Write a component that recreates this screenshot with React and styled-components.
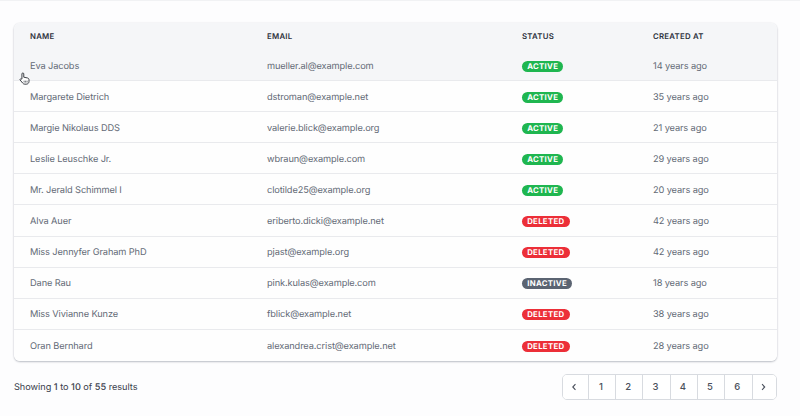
import React from "react";
import styled, { createGlobalStyle } from "styled-components";

const users = [
  ["Eva Jacobs", "mueller.al@example.com", "active", "14 years ago"],
  ["Margarete Dietrich", "dstroman@example.net", "active", "35 years ago"],
  ["Margie Nikolaus DDS", "valerie.blick@example.org", "active", "21 years ago"],
  ["Leslie Leuschke Jr.", "wbraun@example.com", "active", "29 years ago"],
  ["Mr. Jerald Schimmel I", "clotilde25@example.org", "active", "20 years ago"],
  ["Alva Auer", "eriberto.dicki@example.net", "deleted", "42 years ago"],
  ["Miss Jennyfer Graham PhD", "pjast@example.org", "deleted", "42 years ago"],
  ["Dane Rau", "pink.kulas@example.com", "inactive", "18 years ago"],
  ["Miss Vivianne Kunze", "fblick@example.net", "deleted", "38 years ago"],
  ["Oran Bernhard", "alexandrea.crist@example.net", "deleted", "28 years ago"],
];

const statusColors = {
  active: "#1fb650",
  deleted: "#ec2f38",
  inactive: "#5b6472",
};

function App() {
  return (
    <Page>
      <GlobalStyle />
      <Card>
        <HeadRow>
          <HeadCell>Name</HeadCell>
          <HeadCell>Email</HeadCell>
          <HeadCell>Status</HeadCell>
          <HeadCell>Created at</HeadCell>
        </HeadRow>
        {users.map(([name, email, status, created], i) => (
          <Row key={email} $hovered={i === 0}>
            <Cell>{name}</Cell>
            <Cell>{email}</Cell>
            <Cell>
              <Badge $status={status}>{status}</Badge>
            </Cell>
            <Cell>{created}</Cell>
          </Row>
        ))}
        <Cursor viewBox="0 0 12 14" fill="#fff" stroke="#2b2f36" strokeWidth="1">
          <path d="M3.2 7.6V2a1 1 0 0 1 2 0v3.6l4 .8c1 .2 1.7 1 1.7 2v1.8c0 1.6-1.2 3-3 3H6.4c-1 0-1.8-.4-2.4-1.2L1.2 8.6c-.5-.7.6-1.7 1.3-1z" />
          <path d="M5.6 9.4v2M7.2 9.4v2M8.8 9.4v2" strokeWidth="0.7" />
        </Cursor>
      </Card>
      <Footer>
        <Summary>
          Showing <b>1</b> to <b>10</b> of <b>55</b> results
        </Summary>
        <Pagination>
          <PageButton aria-label="Previous" $arrow>
            <Chevron viewBox="0 0 8 10">
              <path d="M5.5 1.5 2.2 5l3.3 3.5" />
            </Chevron>
          </PageButton>
          {[1, 2, 3, 4, 5, 6].map((n) => (
            <PageButton key={n}>{n}</PageButton>
          ))}
          <PageButton aria-label="Next" $arrow>
            <Chevron viewBox="0 0 8 10">
              <path d="M2.5 1.5 5.8 5 2.5 8.5" />
            </Chevron>
          </PageButton>
        </Pagination>
      </Footer>
    </Page>
  );
}

const GlobalStyle = createGlobalStyle`
  html, body {
    margin: 0;
    padding: 0;
    background: #fdfdfe;
    font-family: Inter, "Liberation Sans", sans-serif;
    text-rendering: geometricPrecision;
  }
`;

const Page = styled.div`
  width: 800px;
  height: 416px;
  box-sizing: border-box;
  padding: 23px 23px 0 14px;
  border-top: 1px solid #f1f2f4;
  overflow: hidden;
`;

const Card = styled.div`
  position: relative;
  margin-top: -1px;
  background: #fff;
  border-radius: 6px;
  overflow: hidden;
  box-shadow: 0 1px 2px rgba(30, 40, 60, 0.28), 0 0 2px rgba(30, 40, 60, 0.08);
`;

const columns = "237px 255px 131px 1fr";

const HeadRow = styled.div`
  display: grid;
  grid-template-columns: ${columns};
  height: 27px;
  box-sizing: border-box;
  padding-bottom: 1px;
  align-items: center;
  background: #f5f6f8;
`;

const HeadCell = styled.div`
  padding: 0 16px;
  font-size: 7.8px;
  font-weight: 600;
  letter-spacing: 0.26px;
  text-transform: uppercase;
  color: #2b303b;
`;

const Row = styled.div`
  display: grid;
  grid-template-columns: ${columns};
  height: 31.1px;
  box-sizing: border-box;
  align-items: center;
  padding-top: 2px;
  background: ${(props) => (props.$hovered ? "#f5f6f8" : "#fefefe")};
  border-bottom: 1px solid #e9eaed;
  &:nth-last-child(2) {
    border-bottom: none;
  }
`;

const Cell = styled.div`
  padding: 0 16px;
  font-size: 9.25px;
  letter-spacing: -0.12px;
  color: #636a76;
  white-space: nowrap;
`;

const Badge = styled.span`
  display: block;
  width: fit-content;
  padding: 0 5.2px;
  height: 11px;
  line-height: 11px;
  border-radius: 6px;
  font-size: 7.8px;
  font-weight: 700;
  letter-spacing: 0.3px;
  text-transform: uppercase;
  color: #fff;
  background: ${(props) => statusColors[props.$status]};
`;

const Cursor = styled.svg`
  position: absolute;
  left: 5px;
  top: 49px;
  width: 11px;
  height: 13px;
`;

const Footer = styled.div`
  display: flex;
  justify-content: space-between;
  align-items: center;
  margin-top: 13px;
`;

const Summary = styled.div`
  font-size: 9.2px;
  letter-spacing: -0.03px;
  padding-top: 2px;
  color: #3a404c;
  b {
    font-weight: 500;
  }
`;

const Pagination = styled.div`
  display: flex;
  height: 26px;
  box-sizing: border-box;
  background: #fff;
  border: 1px solid #d8dbe0;
  border-radius: 5px;
  overflow: hidden;
`;

const PageButton = styled.button`
  width: ${(props) => (props.$arrow ? "24.5px" : "27.3px")};
  padding: 0 2px 0 0;
  border: none;
  border-left: 1px solid #d8dbe0;
  background: #fff;
  display: flex;
  align-items: center;
  justify-content: center;
  font-family: inherit;
  font-size: 9.5px;
  font-weight: 500;
  color: #4a505c;
  &:first-child {
    border-left: none;
  }
`;

const Chevron = styled.svg`
  width: 6.5px;
  height: 8px;
  fill: none;
  stroke: #4a505c;
  stroke-width: 1.4;
`;

export default App;
